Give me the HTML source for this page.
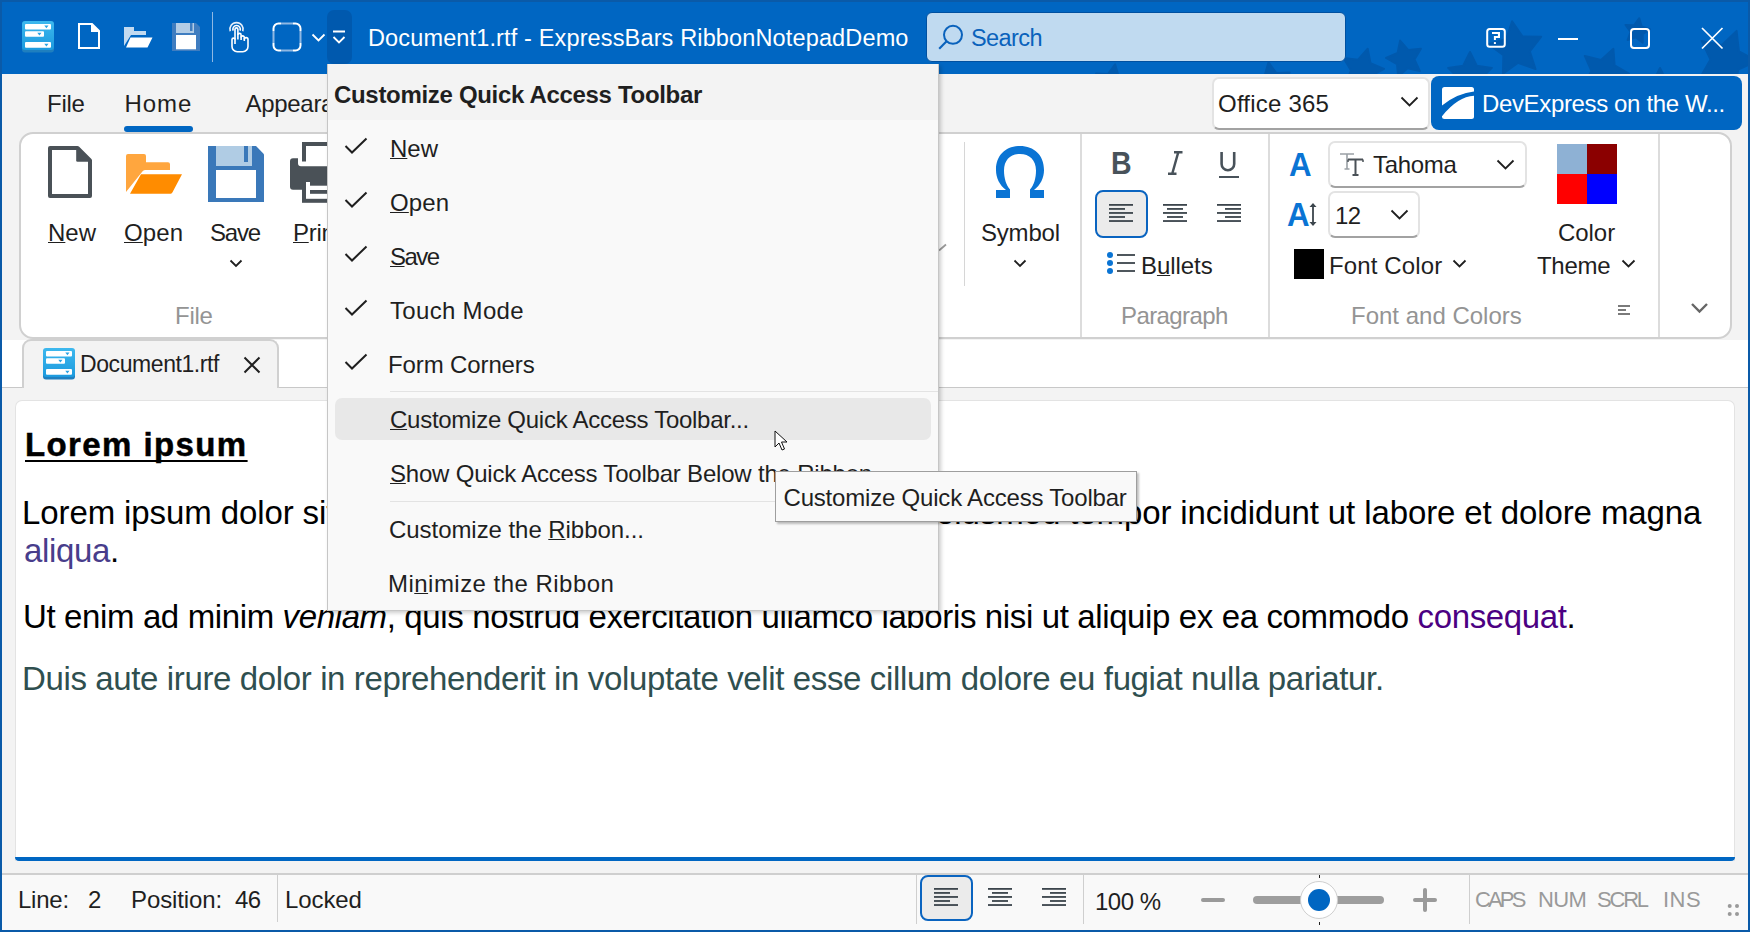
<!DOCTYPE html><html><head><meta charset="utf-8"><style>
*{margin:0;padding:0}
html,body{width:1750px;height:932px;overflow:hidden;background:#fff}
body{position:relative;font-family:"Liberation Sans",sans-serif}
.t{position:absolute;white-space:pre}
u{text-decoration-skip-ink:none;text-decoration-thickness:1.3px}
</style></head><body><div style="position:absolute;left:0px;top:0px;width:1750px;height:932px;background:#0a5aa8;"></div><div style="position:absolute;left:2px;top:2px;width:1746px;height:72px;background:#0066c2;"></div><svg style="position:absolute;left:0px;top:0px;clip-path:inset(2px 2px 0 0)" width="1750" height="74" viewBox="0 0 1750 74"><polygon points="1115.1,64.3 1118.5,75.7 1129.8,79.5 1119.9,86.2 1119.9,98.2 1110.4,90.9 1099.1,94.5 1103.1,83.3 1096.1,73.5 1108.1,73.9" fill="#0059ad" stroke="#0059ad" stroke-width="2" stroke-linejoin="round"/><polygon points="1268.5,62.3 1276.4,73.0 1289.7,72.6 1281.9,83.4 1286.4,95.9 1273.7,91.8 1263.2,100.0 1263.2,86.7 1252.2,79.2 1264.8,75.1" fill="#0059ad" stroke="#0059ad" stroke-width="2" stroke-linejoin="round"/><polygon points="1367.7,48.7 1370.5,63.1 1384.0,68.8 1371.2,76.0 1369.9,90.5 1359.2,80.6 1344.9,83.8 1351.0,70.6 1343.5,58.0 1358.1,59.7" fill="#0059ad" stroke="#0059ad" stroke-width="2" stroke-linejoin="round"/><polygon points="1400.1,40.6 1408.4,50.1 1420.9,48.7 1414.5,59.5 1419.8,71.0 1407.5,68.2 1398.2,76.7 1397.0,64.2 1386.0,58.0 1397.6,53.0" fill="#0059ad" stroke="#0059ad" stroke-width="2" stroke-linejoin="round"/><polygon points="1470.0,52.0 1476.8,65.7 1491.9,67.9 1480.9,78.6 1483.5,93.6 1470.0,86.5 1456.5,93.6 1459.1,78.6 1448.1,67.9 1463.2,65.7" fill="#0059ad" stroke="#0059ad" stroke-width="2" stroke-linejoin="round"/><polygon points="1512.1,21.3 1522.6,36.6 1541.2,36.7 1529.8,51.4 1535.5,69.1 1517.9,62.9 1502.9,73.7 1503.4,55.1 1488.4,44.1 1506.3,38.9" fill="#0059ad" stroke="#0059ad" stroke-width="2" stroke-linejoin="round"/><polygon points="1639.3,18.2 1641.7,26.5 1649.9,29.2 1642.7,34.1 1642.7,42.7 1635.9,37.4 1627.6,40.0 1630.6,31.9 1625.5,24.9 1634.2,25.2" fill="#0059ad" stroke="#0059ad" stroke-width="2" stroke-linejoin="round"/><polygon points="1613.4,48.8 1614.6,65.4 1628.9,73.7 1613.6,80.0 1610.0,96.3 1599.3,83.6 1582.8,85.2 1591.5,71.1 1584.8,55.9 1601.0,59.9" fill="#0059ad" stroke="#0059ad" stroke-width="2" stroke-linejoin="round"/><polygon points="1736.6,30.9 1738.9,51.3 1757.0,61.1 1738.2,69.5 1734.5,89.8 1720.7,74.6 1700.3,77.3 1710.5,59.5 1701.6,40.9 1721.7,45.1" fill="#0059ad" stroke="#0059ad" stroke-width="2" stroke-linejoin="round"/><polygon points="1660.0,68.0 1665.3,78.7 1677.1,80.4 1668.6,88.8 1670.6,100.6 1660.0,95.0 1649.4,100.6 1651.4,88.8 1642.9,80.4 1654.7,78.7" fill="#0059ad" stroke="#0059ad" stroke-width="2" stroke-linejoin="round"/></svg><div style="position:absolute;left:2px;top:74px;width:1746px;height:266px;background:#f3f3f3;"></div><div style="position:absolute;left:2px;top:340px;width:1746px;height:47px;background:#ffffff;"></div><div style="position:absolute;left:2px;top:387px;width:1746px;height:486px;background:#f3f3f3;border-top:1px solid #c8c8c8;box-sizing:border-box;"></div><div style="position:absolute;left:2px;top:873px;width:1746px;height:57px;background:#f9f9f9;border-top:2px solid #cfcfcf;box-sizing:border-box;"></div><svg style="position:absolute;left:22px;top:21px;" width="33" height="32" viewBox="0 0 33 32">
<defs><linearGradient id="ag1" x1="0" y1="0" x2="0" y2="1"><stop offset="0" stop-color="#3db8ee"/><stop offset="1" stop-color="#1c9ade"/></linearGradient></defs>
<rect x="0" y="1.5" width="32" height="30" rx="3" fill="#1f7fbf"/>
<rect x="0" y="0" width="32" height="29" rx="3" fill="url(#ag1)"/>
<rect x="3" y="3" width="26" height="5.5" rx="1" fill="#fff"/>
<rect x="3" y="10.2" width="19" height="5.5" rx="1" fill="#fff"/>
<rect x="3" y="21" width="26" height="5.8" rx="1" fill="#fff"/>
<path d="M22.3 4.6 h4.2 l-2.1 2.6z M15.3 11.8 h4.2 l-2.1 2.6z M22.3 22.8 h4.2 l-2.1 2.6z" fill="#2aa3e4"/>
</svg><svg style="position:absolute;left:77px;top:22px;" width="24" height="28" viewBox="0 0 24 28"><path d="M2 2 H15 L22 9 V26 H2 Z" fill="none" stroke="#fff" stroke-width="2"/><path d="M14 1 V10 H23 Z" fill="#fff"/></svg><svg style="position:absolute;left:124px;top:27px;" width="29" height="21" viewBox="0 0 29 21"><path d="M0 0 H10 V4 H22 V8 H7 L0 19 Z" fill="#c2daf0"/><path d="M6.5 10.5 H28.5 L23.5 20.5 H2 Z" fill="#fff"/></svg><svg style="position:absolute;left:172px;top:23px;" width="28" height="28" viewBox="0 0 28 28"><path d="M0 0 H24 L28 4 V28 H0 Z" fill="#3f7dc0"/><rect x="4" y="0" width="18" height="10" fill="#b3cde6"/><rect x="18" y="0" width="2.5" height="8" fill="#3f7dc0"/><rect x="4" y="12" width="20" height="14.3" fill="#fff"/></svg><div style="position:absolute;left:212px;top:12px;width:1px;height:50px;background:#8fb8e3;"></div><svg style="position:absolute;left:226px;top:20px;" width="26" height="34" viewBox="0 0 26 34"><g fill="none" stroke="#fff" stroke-width="1.6" stroke-linecap="butt">
<path d="M4.2 11.2 A6.6 6.6 0 1 1 16.8 11.2" stroke="#e6effa"/><path d="M7.2 10.6 A3.7 3.7 0 1 1 14.0 10.6"/>
<path d="M9 24 V9.3 A1.45 1.45 0 0 1 11.9 9.3 V19.5"/>
<path d="M11.9 15 A1.6 1.6 0 0 1 15.1 15 V20"/>
<path d="M15.1 17.5 A1.6 1.6 0 0 1 18.3 17.5 V21"/>
<path d="M18.3 19.5 A1.85 1.85 0 0 1 22 19.5 V26.5 A5.2 5.2 0 0 1 16.8 31.7 H11.2 A5.2 5.2 0 0 1 6 26.5 V19.6 A1.5 1.5 0 0 1 9 19.6"/>
</g></svg><svg style="position:absolute;left:272px;top:22px;" width="30" height="30" viewBox="0 0 30 30"><g fill="none" stroke="#fff" stroke-width="2">
<path d="M1.5 9 V6.5 a5 5 0 0 1 5 -5 H9"/><path d="M21 1.5 H23.5 a5 5 0 0 1 5 5 V9"/>
<path d="M28.5 21 V23.5 a5 5 0 0 1 -5 5 H21"/><path d="M9 28.5 H6.5 a5 5 0 0 1 -5 -5 V21"/></g>
<g stroke="#8fb8e3" stroke-width="2"><path d="M9 1.5 H21 M28.5 9 V21 M21 28.5 H9 M1.5 21 V9"/></g></svg><svg style="position:absolute;left:311px;top:33px;" width="16" height="10" viewBox="0 0 16 10"><path d="M1.5 1.5 L7.5 7.5 L13.5 1.5" fill="none" stroke="#fff" stroke-width="1.8"/></svg><div style="position:absolute;left:327px;top:10px;width:25px;height:54px;background:#0059ae;border-radius:7px;"></div><svg style="position:absolute;left:330px;top:28px;" width="18" height="18" viewBox="0 0 18 18"><path d="M3 3.5 H15" stroke="#fff" stroke-width="2"/><path d="M3.5 9 L9 14.5 L14.5 9" fill="none" stroke="#fff" stroke-width="1.8"/></svg><div class="t " style="left:368.0px;top:27.23px;font-size:23.5px;line-height:23.5px;color:#fff;letter-spacing:0.141px;">Document1.rtf - ExpressBars RibbonNotepadDemo</div><div style="position:absolute;left:926px;top:12px;width:420px;height:50px;background:#c0daf0;border:1px solid #0050a0;border-radius:6px;box-sizing:border-box;"></div><svg style="position:absolute;left:936px;top:24px;" width="30" height="30" viewBox="0 0 30 30"><circle cx="17" cy="10.85" r="9" fill="none" stroke="#0a62bc" stroke-width="2"/><path d="M10.6 17.3 L3.2 24.8" stroke="#0a62bc" stroke-width="2.1"/></svg><div class="t " style="left:971px;top:27.23px;font-size:23.5px;line-height:23.5px;color:#0a62bc;letter-spacing:-0.6px;">Search</div><svg style="position:absolute;left:1485px;top:27px;" width="22" height="22" viewBox="0 0 22 22"><rect x="2.2" y="2" width="17.6" height="17.8" rx="2.5" fill="none" stroke="#fff" stroke-width="2"/><path d="M7 5.1 H15 V11 H10.9 V12.9 H8.9 V8.9 H12.9 V7.1 H7 Z" fill="#fff"/><rect x="8.9" y="15.1" width="2" height="1.9" fill="#fff"/></svg><div style="position:absolute;left:1558px;top:38px;width:20px;height:2px;background:#fff;"></div><svg style="position:absolute;left:1629px;top:27px;" width="22" height="22" viewBox="0 0 22 22"><rect x="2" y="2" width="18" height="19" rx="3" fill="none" stroke="#fff" stroke-width="2"/></svg><svg style="position:absolute;left:1700px;top:26px;" width="24" height="24" viewBox="0 0 24 24"><path d="M2 2 L22.5 22.5 M22.5 2 L2 22.5" stroke="#fff" stroke-width="1.7"/></svg><div class="t " style="left:47px;top:91.60px;font-size:24px;line-height:24px;color:#1f1f1f;letter-spacing:-0.267px;">File</div><div class="t " style="left:124.5px;top:91.60px;font-size:24px;line-height:24px;color:#1f1f1f;letter-spacing:0.967px;">Home</div><div style="position:absolute;left:124px;top:126px;width:69px;height:6px;background:#0066c2;border-radius:3px;"></div><div class="t " style="left:245.5px;top:91.60px;font-size:24px;line-height:24px;color:#1f1f1f;letter-spacing:-0.3px;">Appearance</div><div style="position:absolute;left:1212px;top:77px;width:218px;height:53px;background:#fff;border:2px solid #e3e3e3;border-bottom:2px solid #a2a2a2;border-radius:7px;box-sizing:border-box;"></div><div class="t " style="left:1218px;top:92.10px;font-size:24px;line-height:24px;color:#1f1f1f;letter-spacing:0.222px;">Office 365</div><svg style="position:absolute;left:1400px;top:96px;" width="20" height="12" viewBox="0 0 20 12"><path d="M1.5 1.5 L9.5 9.5 L17.5 1.5" fill="none" stroke="#1f1f1f" stroke-width="1.8"/></svg><div style="position:absolute;left:1431px;top:76px;width:311px;height:54px;background:#0066c2;border-radius:8px;"></div><svg style="position:absolute;left:1442px;top:87px;" width="32" height="32" viewBox="0 0 32 32"><rect x="0" y="0" width="32" height="32" rx="2.5" fill="#fff"/><path d="M-1 19.2 Q16 5.8 33 4.5 V8.8 Q16 8.9 -1 30.5 Z" fill="#0066c2"/></svg><div class="t " style="left:1482px;top:91.60px;font-size:24px;line-height:24px;color:#fff;letter-spacing:-0.357px;">DevExpress on the W...</div><div style="position:absolute;left:19px;top:132px;width:1713px;height:207px;background:#fff;border:2px solid #d0d0d0;border-radius:14px;box-sizing:border-box;"></div><svg style="position:absolute;left:48px;top:146px;" width="44" height="52" viewBox="0 0 44 52"><path d="M2 2 H29.5 L42 14.5 V50 H2 Z" fill="#fff" stroke="#4a5157" stroke-width="4" stroke-linejoin="round"/><path d="M28.2 0.5 V14.5 a1.3 1.3 0 0 0 1.3 1.3 H43.5 Z" fill="#4a5157"/></svg><svg style="position:absolute;left:125px;top:153px;" width="58" height="42" viewBox="0 0 58 42"><path d="M1 3 a2 2 0 0 1 2 -2 H19 a2 2 0 0 1 2 2 V9.3 H43 a2 2 0 0 1 2 2 V17 H20 a3 3 0 0 0 -2.6 1.5 L1 39 Z" fill="#ffa63e"/><path d="M16 21.2 H57 L47.5 39.3 a2 2 0 0 1 -1.8 1.4 H5 Z" fill="#ff8c00"/></svg><svg style="position:absolute;left:208px;top:146px;" width="56" height="56" viewBox="0 0 56 56"><path d="M0 0 H48 L56 8.3 V56 H0 Z" fill="#3a78b9"/><rect x="8" y="0" width="36" height="20" fill="#b0cce4"/><rect x="36" y="0" width="4" height="16" fill="#3a78b9"/><rect x="8" y="24" width="40" height="28" fill="#fff"/></svg><svg style="position:absolute;left:289px;top:141px;" width="40" height="62" viewBox="0 0 40 62"><path d="M15 20.6 V3 H45" fill="none" stroke="#4a5157" stroke-width="4"/><path d="M1 20.2 a3 3 0 0 1 3 -3 H9 V22.2 a3 3 0 0 0 3 3 H45 V37 H13 V48.7 H4 a3 3 0 0 1 -3 -3 Z" fill="#4a5157"/><rect x="15" y="39" width="34" height="20.8" fill="#fff" stroke="#4a5157" stroke-width="4"/><rect x="21" y="41" width="24" height="3.7" fill="#4a5157"/><rect x="21" y="49" width="24" height="3.8" fill="#4a5157"/></svg><div class="t " style="left:48px;top:220.60px;font-size:24px;line-height:24px;color:#1f1f1f;"><u>N</u>ew</div><div class="t " style="left:124px;top:220.60px;font-size:24px;line-height:24px;color:#1f1f1f;letter-spacing:0.133px;"><u>O</u>pen</div><div class="t " style="left:210px;top:220.60px;font-size:24px;line-height:24px;color:#1f1f1f;letter-spacing:-1.2px;">Save</div><div class="t " style="left:293px;top:220.60px;font-size:24px;line-height:24px;color:#1f1f1f;letter-spacing:-0.3px;"><u>P</u>rint</div><svg style="position:absolute;left:229px;top:259px;" width="14" height="10" viewBox="0 0 14 10"><path d="M1.5 1.5 L7 7 L12.5 1.5" fill="none" stroke="#1f1f1f" stroke-width="1.8"/></svg><div class="t " style="left:175px;top:304.10px;font-size:24px;line-height:24px;color:#949494;letter-spacing:-0.267px;">File</div><svg style="position:absolute;left:938px;top:242px;" width="10" height="10" viewBox="0 0 10 10"><path d="M1 8.5 L8 2.5" stroke="#9a9a9a" stroke-width="1.8"/></svg><div style="position:absolute;left:964px;top:142px;width:1px;height:144px;background:#d6d6d6;"></div><svg style="position:absolute;left:994px;top:144px;" width="52" height="56" viewBox="0 0 52 56"><path d="M2 54 V46 H12 C5.5 41 2 34 2 26 C2 11 12 2 26 2 C40 2 50 11 50 26 C50 34 46.5 41 40 46 H50 V54 H36 V45.5 C40 41 42 34 42 26.5 C42 16 35.5 10 26 10 C16.5 10 10 16 10 26.5 C10 34 12 41 16 45.5 V54 Z" fill="#0a74d4"/></svg><div class="t " style="left:981px;top:220.60px;font-size:24px;line-height:24px;color:#1f1f1f;letter-spacing:-0.2px;">Symbol</div><svg style="position:absolute;left:1013px;top:259px;" width="14" height="10" viewBox="0 0 14 10"><path d="M1.5 1.5 L7 7 L12.5 1.5" fill="none" stroke="#1f1f1f" stroke-width="1.8"/></svg><div style="position:absolute;left:1080px;top:134px;width:2px;height:203px;background:#dcdcdc;"></div><div style="position:absolute;left:1268px;top:134px;width:2px;height:203px;background:#dcdcdc;"></div><div style="position:absolute;left:1658px;top:134px;width:2px;height:203px;background:#dcdcdc;"></div><div class="t " style="left:1110.5px;top:147.65px;font-size:31px;line-height:31px;color:#48525a;font-weight:700;transform:scaleX(0.92);transform-origin:left;">B</div><svg style="position:absolute;left:1166px;top:151px;" width="18" height="24" viewBox="0 0 18 24"><path d="M8 1.2 H16.5 M2 22.8 H10.5 M12.3 1.2 L6.2 22.8" fill="none" stroke="#48525a" stroke-width="2.4"/></svg><svg style="position:absolute;left:1219px;top:151px;" width="22" height="28" viewBox="0 0 22 28"><path d="M2.6 1 V13 a6.3 6.3 0 0 0 12.6 0 V1" fill="none" stroke="#48525a" stroke-width="2.6"/><rect x="0" y="25" width="20" height="2" fill="#48525a"/></svg><div style="position:absolute;left:1095px;top:190px;width:53px;height:48px;background:#ebebeb;border:2px solid #0a64c0;border-radius:8px;box-sizing:border-box;"></div><svg style="position:absolute;left:1109px;top:204px;" width="24" height="20" viewBox="0 0 24 20"><rect x="0" y="0.00" width="24" height="1.8" fill="#3c454c"/><rect x="0" y="4.03" width="16" height="1.8" fill="#3c454c"/><rect x="0" y="8.06" width="24" height="1.8" fill="#3c454c"/><rect x="0" y="12.09" width="16" height="1.8" fill="#3c454c"/><rect x="0" y="16.12" width="24" height="1.8" fill="#3c454c"/></svg><svg style="position:absolute;left:1163px;top:204px;" width="24" height="20" viewBox="0 0 24 20"><rect x="0" y="0.00" width="24" height="1.8" fill="#3c454c"/><rect x="4" y="4.03" width="16" height="1.8" fill="#3c454c"/><rect x="0" y="8.06" width="24" height="1.8" fill="#3c454c"/><rect x="4" y="12.09" width="16" height="1.8" fill="#3c454c"/><rect x="0" y="16.12" width="24" height="1.8" fill="#3c454c"/></svg><svg style="position:absolute;left:1217px;top:204px;" width="24" height="20" viewBox="0 0 24 20"><rect x="0" y="0.00" width="24" height="1.8" fill="#3c454c"/><rect x="8" y="4.03" width="16" height="1.8" fill="#3c454c"/><rect x="0" y="8.06" width="24" height="1.8" fill="#3c454c"/><rect x="8" y="12.09" width="16" height="1.8" fill="#3c454c"/><rect x="0" y="16.12" width="24" height="1.8" fill="#3c454c"/></svg><svg style="position:absolute;left:1106px;top:251px;" width="30" height="24" viewBox="0 0 30 24"><circle cx="4" cy="4" r="3" fill="#0a74d4"/><circle cx="4" cy="12" r="3" fill="#0a74d4"/><circle cx="4" cy="20" r="3" fill="#0a74d4"/><rect x="11" y="3.1" width="18" height="1.8" fill="#3c454c"/><rect x="11" y="11.1" width="18" height="1.8" fill="#3c454c"/><rect x="11" y="19.1" width="18" height="1.8" fill="#3c454c"/></svg><div class="t " style="left:1141px;top:253.60px;font-size:24px;line-height:24px;color:#1f1f1f;letter-spacing:-0.067px;">B<u>u</u>llets</div><div class="t " style="left:1121px;top:304.10px;font-size:24px;line-height:24px;color:#949494;letter-spacing:-0.6px;">Paragraph</div><div class="t " style="left:1288.5px;top:147.10px;font-size:34px;line-height:34px;color:#0a74d4;font-weight:700;transform:scaleX(0.92);transform-origin:left;">A</div><div class="t " style="left:1286.5px;top:197.10px;font-size:34px;line-height:34px;color:#0a74d4;font-weight:700;transform:scaleX(0.92);transform-origin:left;">A</div><svg style="position:absolute;left:1308px;top:202px;" width="10" height="26" viewBox="0 0 10 26"><path d="M5 2 V23" stroke="#3c454c" stroke-width="1.8"/><path d="M1.5 5 L5 1 L8.5 5 Z M1.5 20 L5 24 L8.5 20 Z" fill="#3c454c"/></svg><div style="position:absolute;left:1328px;top:141px;width:199px;height:47px;background:#fff;border:2px solid #e3e3e3;border-bottom:2px solid #a2a2a2;border-radius:7px;box-sizing:border-box;"></div><svg style="position:absolute;left:1338px;top:151px;" width="28" height="28" viewBox="0 0 28 28"><path d="M2 3 H16 M9 3 V18 M6.5 18 H11.5" fill="none" stroke="#9aa0a5" stroke-width="1.6"/><path d="M10 8.5 H25 M17.5 8.5 V24 M14.5 24 H20.5" fill="none" stroke="#4a5157" stroke-width="2"/><path d="M10 8.5 V11 M25 8.5 V11" stroke="#4a5157" stroke-width="1.5"/></svg><div class="t " style="left:1373px;top:153.10px;font-size:24px;line-height:24px;color:#1f1f1f;letter-spacing:-0.3px;">Tahoma</div><svg style="position:absolute;left:1496px;top:159px;" width="20" height="12" viewBox="0 0 20 12"><path d="M1.5 1.5 L9.5 9.5 L17.5 1.5" fill="none" stroke="#1f1f1f" stroke-width="1.8"/></svg><div style="position:absolute;left:1328px;top:191px;width:92px;height:47px;background:#fff;border:2px solid #e3e3e3;border-bottom:2px solid #a2a2a2;border-radius:7px;box-sizing:border-box;"></div><div class="t " style="left:1335px;top:203.60px;font-size:24px;line-height:24px;color:#1f1f1f;letter-spacing:-0.5px;">12</div><svg style="position:absolute;left:1390px;top:208.5px;" width="20" height="12" viewBox="0 0 20 12"><path d="M1.5 1.5 L9.5 9.5 L17.5 1.5" fill="none" stroke="#1f1f1f" stroke-width="1.8"/></svg><div style="position:absolute;left:1294px;top:249px;width:30px;height:30px;background:#000;"></div><div class="t " style="left:1329px;top:253.60px;font-size:24px;line-height:24px;color:#1f1f1f;letter-spacing:0.122px;">Font Color</div><svg style="position:absolute;left:1452px;top:259px;" width="16" height="10" viewBox="0 0 16 10"><path d="M1.5 1.5 L7.5 7.5 L13.5 1.5" fill="none" stroke="#1f1f1f" stroke-width="1.8"/></svg><div style="position:absolute;left:1557px;top:144px;width:30px;height:30px;background:#8eb1d4;"></div><div style="position:absolute;left:1587px;top:144px;width:30px;height:30px;background:#8b0000;"></div><div style="position:absolute;left:1557px;top:174px;width:30px;height:30px;background:#ff0000;"></div><div style="position:absolute;left:1587px;top:174px;width:30px;height:30px;background:#0000ff;"></div><div class="t " style="left:1558px;top:220.60px;font-size:24px;line-height:24px;color:#1f1f1f;letter-spacing:-0.05px;">Color</div><div class="t " style="left:1537px;top:253.60px;font-size:24px;line-height:24px;color:#1f1f1f;letter-spacing:-0.3px;">Theme</div><svg style="position:absolute;left:1621px;top:259px;" width="16" height="10" viewBox="0 0 16 10"><path d="M1.5 1.5 L7.5 7.5 L13.5 1.5" fill="none" stroke="#1f1f1f" stroke-width="1.8"/></svg><div class="t " style="left:1351px;top:304.10px;font-size:24px;line-height:24px;color:#949494;">Font and Colors</div><svg style="position:absolute;left:1618px;top:305px;" width="14" height="11" viewBox="0 0 14 11"><rect x="0" y="0" width="12" height="2" fill="#7a7a7a"/><rect x="0" y="4" width="8" height="2" fill="#7a7a7a"/><rect x="0" y="8" width="12" height="2" fill="#7a7a7a"/></svg><svg style="position:absolute;left:1690px;top:302px;" width="20" height="14" viewBox="0 0 20 14"><path d="M2 2 L9.5 9.5 L17 2" fill="none" stroke="#666" stroke-width="2.4"/></svg><div style="position:absolute;left:22px;top:339px;width:257px;height:49px;background:#f3f3f3;border:2px solid #d0d0d0;border-bottom:none;border-radius:9px 9px 0 0;box-sizing:border-box;"></div><svg style="position:absolute;left:43px;top:348px;" width="33" height="32" viewBox="0 0 33 32">
<defs><linearGradient id="ag2" x1="0" y1="0" x2="0" y2="1"><stop offset="0" stop-color="#3db8ee"/><stop offset="1" stop-color="#1c9ade"/></linearGradient></defs>
<rect x="0" y="1.5" width="32" height="30" rx="3" fill="#1f7fbf"/>
<rect x="0" y="0" width="32" height="29" rx="3" fill="url(#ag2)"/>
<rect x="3" y="3" width="26" height="5.5" rx="1" fill="#fff"/>
<rect x="3" y="10.2" width="19" height="5.5" rx="1" fill="#fff"/>
<rect x="3" y="21" width="26" height="5.8" rx="1" fill="#fff"/>
<path d="M22.3 4.6 h4.2 l-2.1 2.6z M15.3 11.8 h4.2 l-2.1 2.6z M22.3 22.8 h4.2 l-2.1 2.6z" fill="#2aa3e4"/>
</svg><div class="t " style="left:80px;top:352.95px;font-size:23px;line-height:23px;color:#1f1f1f;letter-spacing:-0.417px;">Document1.rtf</div><svg style="position:absolute;left:243px;top:356px;" width="18" height="18" viewBox="0 0 18 18"><path d="M1.5 1.5 L16.5 16.5 M16.5 1.5 L1.5 16.5" stroke="#1f1f1f" stroke-width="2"/></svg><div style="position:absolute;left:15px;top:400px;width:1720px;height:461px;background:#fff;border:1px solid #e3e3e3;border-bottom:none;border-radius:7px 7px 0 0;box-sizing:border-box;"></div><div style="position:absolute;left:15px;top:857px;width:1720px;height:4px;background:#0066c2;border-radius:0 0 6px 6px;"></div><div class="t " style="left:25px;top:427.95px;font-size:33px;line-height:33px;color:#000;font-weight:700;letter-spacing:1.4px;-webkit-text-stroke:0.5px #000;"><u style="text-decoration-thickness:2px;text-underline-offset:4px">Lorem ipsum</u></div><div class="t " style="left:22px;top:495.95px;font-size:33px;line-height:33px;color:#000;letter-spacing:-0.104px;">Lorem ipsum dolor sit amet, consectetur adipiscing elit, sed do eiusmod tempor incididunt ut labore et dolore magna</div><div class="t " style="left:24px;top:534.45px;font-size:33px;line-height:33px;color:#000;letter-spacing:-0.367px;"><span style="color:#483d8b">aliqua</span>.</div><div class="t " style="left:23px;top:600.15px;font-size:33px;line-height:33px;color:#000;letter-spacing:-0.372px;">Ut enim ad minim <i>veniam</i>, quis nostrud exercitation ullamco laboris nisi ut aliquip ex ea commodo <span style="color:#4b0082">consequat</span>.</div><div class="t " style="left:22px;top:662.15px;font-size:33px;line-height:33px;color:#2f4f4f;letter-spacing:-0.372px;">Duis aute irure dolor in reprehenderit in voluptate velit esse cillum dolore eu fugiat nulla pariatur.</div><div class="t " style="left:18px;top:887.60px;font-size:24px;line-height:24px;color:#1f1f1f;letter-spacing:-0.25px;">Line:</div><div class="t " style="left:88px;top:887.60px;font-size:24px;line-height:24px;color:#1f1f1f;">2</div><div class="t " style="left:131px;top:887.60px;font-size:24px;line-height:24px;color:#1f1f1f;letter-spacing:-0.1px;">Position:</div><div class="t " style="left:235px;top:887.60px;font-size:24px;line-height:24px;color:#1f1f1f;letter-spacing:-0.5px;">46</div><div style="position:absolute;left:277px;top:875px;width:1px;height:47px;background:#cfcfcf;"></div><div class="t " style="left:285px;top:887.60px;font-size:24px;line-height:24px;color:#1f1f1f;letter-spacing:-0.1px;">Locked</div><div style="position:absolute;left:916px;top:875px;width:1px;height:49px;background:#cfcfcf;"></div><div style="position:absolute;left:920px;top:875px;width:53px;height:46px;background:#ebebeb;border:2px solid #0a64c0;border-radius:8px;box-sizing:border-box;"></div><svg style="position:absolute;left:934px;top:888px;" width="24" height="20" viewBox="0 0 24 20"><rect x="0" y="0.00" width="24" height="1.8" fill="#3c454c"/><rect x="0" y="4.03" width="16" height="1.8" fill="#3c454c"/><rect x="0" y="8.06" width="24" height="1.8" fill="#3c454c"/><rect x="0" y="12.09" width="16" height="1.8" fill="#3c454c"/><rect x="0" y="16.12" width="24" height="1.8" fill="#3c454c"/></svg><svg style="position:absolute;left:988px;top:888px;" width="24" height="20" viewBox="0 0 24 20"><rect x="0" y="0.00" width="24" height="1.8" fill="#3c454c"/><rect x="4" y="4.03" width="16" height="1.8" fill="#3c454c"/><rect x="0" y="8.06" width="24" height="1.8" fill="#3c454c"/><rect x="4" y="12.09" width="16" height="1.8" fill="#3c454c"/><rect x="0" y="16.12" width="24" height="1.8" fill="#3c454c"/></svg><svg style="position:absolute;left:1042px;top:888px;" width="24" height="20" viewBox="0 0 24 20"><rect x="0" y="0.00" width="24" height="1.8" fill="#3c454c"/><rect x="8" y="4.03" width="16" height="1.8" fill="#3c454c"/><rect x="0" y="8.06" width="24" height="1.8" fill="#3c454c"/><rect x="8" y="12.09" width="16" height="1.8" fill="#3c454c"/><rect x="0" y="16.12" width="24" height="1.8" fill="#3c454c"/></svg><div style="position:absolute;left:1083px;top:875px;width:1px;height:49px;background:#cfcfcf;"></div><div class="t " style="left:1095px;top:889.60px;font-size:24px;line-height:24px;color:#1f1f1f;letter-spacing:-0.5px;">100 %</div><div style="position:absolute;left:1201px;top:898px;width:24px;height:4px;background:#9a9a9a;border-radius:2px;"></div><div style="position:absolute;left:1253px;top:896px;width:131px;height:8px;background:#9e9e9e;border-radius:4px;"></div><div style="position:absolute;left:1319px;top:875px;width:1px;height:3px;background:#222;"></div><div style="position:absolute;left:1319px;top:922px;width:1px;height:3px;background:#222;"></div><div style="position:absolute;left:1300px;top:881px;width:38px;height:38px;background:#fff;border:1.5px solid #cfcfcf;border-radius:50%;box-sizing:border-box;"></div><div style="position:absolute;left:1308px;top:889px;width:22px;height:22px;background:#0066c2;border-radius:50%;"></div><div style="position:absolute;left:1413px;top:898px;width:24px;height:4px;background:#9a9a9a;border-radius:2px;"></div><div style="position:absolute;left:1423px;top:888px;width:4px;height:24px;background:#9a9a9a;border-radius:2px;"></div><div style="position:absolute;left:1469px;top:875px;width:1px;height:49px;background:#cfcfcf;"></div><div class="t " style="left:1475px;top:889.30px;font-size:22px;line-height:22px;color:#9a9a9a;letter-spacing:-2.867px;">CAPS</div><div class="t " style="left:1538px;top:889.30px;font-size:22px;line-height:22px;color:#9a9a9a;letter-spacing:-0.7px;">NUM</div><div class="t " style="left:1597px;top:889.30px;font-size:22px;line-height:22px;color:#9a9a9a;letter-spacing:-2.2px;">SCRL</div><div class="t " style="left:1663px;top:889.30px;font-size:22px;line-height:22px;color:#9a9a9a;letter-spacing:0.5px;">INS</div><svg style="position:absolute;left:1724px;top:900px;" width="20" height="20" viewBox="0 0 20 20"><circle cx="5.7" cy="6" r="2" fill="#9a9a9a"/><circle cx="13" cy="6" r="2" fill="#9a9a9a"/><circle cx="5.7" cy="13.9" r="2" fill="#9a9a9a"/><circle cx="13" cy="13.9" r="2" fill="#9a9a9a"/></svg><div style="position:absolute;left:327px;top:64px;width:612px;height:547px;background:#f9f9f9;border:1px solid #c6c6c6;border-top:none;box-sizing:border-box;box-shadow:2px 2px 4px rgba(0,0,0,0.2);"></div><div style="position:absolute;left:328px;top:64px;width:610px;height:56px;background:#f3f3f3;"></div><div class="t " style="left:334px;top:83.10px;font-size:24px;line-height:24px;color:#1f1f1f;font-weight:700;letter-spacing:-0.314px;">Customize Quick Access Toolbar</div><svg style="position:absolute;left:344px;top:137px;" width="25" height="18" viewBox="0 0 25 18"><path d="M1.5 9 L8 15.5 L22.5 1.5" fill="none" stroke="#1f1f1f" stroke-width="2"/></svg><div class="t " style="left:390px;top:136.60px;font-size:24px;line-height:24px;color:#1f1f1f;"><u>N</u>ew</div><svg style="position:absolute;left:344px;top:191px;" width="25" height="18" viewBox="0 0 25 18"><path d="M1.5 9 L8 15.5 L22.5 1.5" fill="none" stroke="#1f1f1f" stroke-width="2"/></svg><div class="t " style="left:390px;top:190.60px;font-size:24px;line-height:24px;color:#1f1f1f;letter-spacing:0.133px;"><u>O</u>pen</div><svg style="position:absolute;left:344px;top:245px;" width="25" height="18" viewBox="0 0 25 18"><path d="M1.5 9 L8 15.5 L22.5 1.5" fill="none" stroke="#1f1f1f" stroke-width="2"/></svg><div class="t " style="left:390px;top:244.60px;font-size:24px;line-height:24px;color:#1f1f1f;letter-spacing:-1.5px;"><u>S</u>ave</div><svg style="position:absolute;left:344px;top:299px;" width="25" height="18" viewBox="0 0 25 18"><path d="M1.5 9 L8 15.5 L22.5 1.5" fill="none" stroke="#1f1f1f" stroke-width="2"/></svg><div class="t " style="left:390px;top:298.60px;font-size:24px;line-height:24px;color:#1f1f1f;letter-spacing:0.311px;">Touch Mode</div><svg style="position:absolute;left:344px;top:353px;" width="25" height="18" viewBox="0 0 25 18"><path d="M1.5 9 L8 15.5 L22.5 1.5" fill="none" stroke="#1f1f1f" stroke-width="2"/></svg><div class="t " style="left:388px;top:352.60px;font-size:24px;line-height:24px;color:#1f1f1f;letter-spacing:-0.118px;">Form Corners</div><div style="position:absolute;left:390px;top:391px;width:548px;height:1px;background:#e3e3e3;"></div><div style="position:absolute;left:335px;top:398px;width:596px;height:42px;background:#e8e8e8;border-radius:7px;"></div><div class="t " style="left:390px;top:407.60px;font-size:24px;line-height:24px;color:#1f1f1f;letter-spacing:-0.269px;"><u>C</u>ustomize Quick Access Toolbar...</div><div class="t " style="left:390px;top:461.60px;font-size:24px;line-height:24px;color:#1f1f1f;letter-spacing:-0.202px;"><u>S</u>how Quick Access Toolbar Below the Ribbon</div><div style="position:absolute;left:390px;top:501px;width:548px;height:1px;background:#e3e3e3;"></div><div class="t " style="left:389px;top:517.60px;font-size:24px;line-height:24px;color:#1f1f1f;letter-spacing:-0.055px;">Customize the <u>R</u>ibbon...</div><div class="t " style="left:388px;top:571.60px;font-size:24px;line-height:24px;color:#1f1f1f;letter-spacing:0.467px;">Mi<u>n</u>imize the Ribbon</div><div style="position:absolute;left:775px;top:471px;width:362px;height:51px;background:#f9f9f9;border:1px solid #9e9e9e;box-sizing:border-box;box-shadow:2px 2px 2px rgba(0,0,0,0.25);"></div><div class="t " style="left:783.5px;top:485.60px;font-size:24px;line-height:24px;color:#1f1f1f;letter-spacing:-0.196px;">Customize Quick Access Toolbar</div><svg style="position:absolute;left:774px;top:430px;" width="16" height="22" viewBox="0 0 16 22"><path d="M1 1 V17 L5 13 L8 20 L10.5 19 L7.5 12 H13 Z" fill="#fff" stroke="#111" stroke-width="1"/></svg></body></html>
